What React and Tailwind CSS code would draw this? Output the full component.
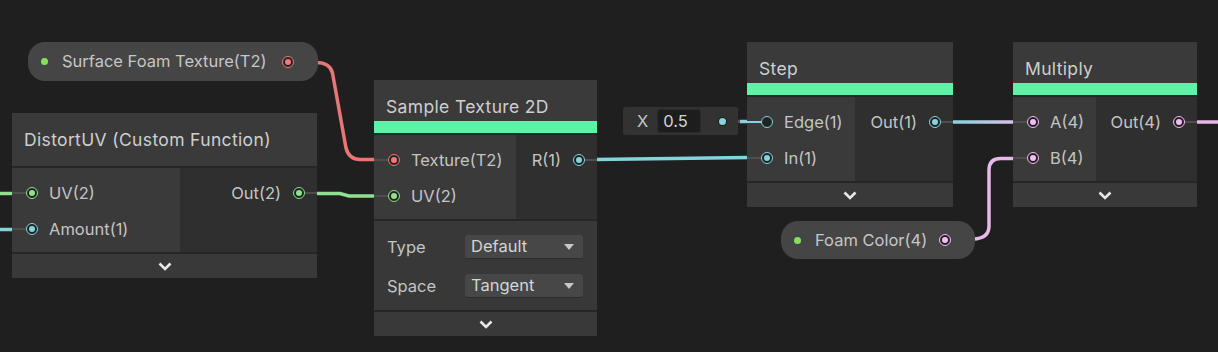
const PORT = {
  green: { ring: 'border-[#8fe08f]', dot: 'bg-[#8fe08f]' },
  cyan: { ring: 'border-[#84d4dc]', dot: 'bg-[#84d4dc]' },
  red: { ring: 'border-[#f07a7a]', dot: 'bg-[#f07a7a]' },
  pink: { ring: 'border-[#f2bdf2]', dot: 'bg-[#f2bdf2]' },
};

const Port = ({ color, empty }) => (
  <span className={`flex items-center justify-center w-[12px] h-[12px] rounded-full border-[1.5px] bg-[#222222] shrink-0 ${PORT[color].ring}`}>
    {!empty && <span className={`w-[6px] h-[6px] rounded-full ${PORT[color].dot}`} />}
  </span>
);

const InRow = ({ label, color, empty, stub = 'bg-[#4e4e4e]' }) => (
  <div className="flex items-center h-[36px]">
    <span className={`w-[14px] h-[2px] shrink-0 ${stub}`} />
    <Port color={color} empty={empty} />
    <span className="ml-[11px] text-[16.5px] text-[#c4c4c4] whitespace-nowrap">{label}</span>
  </div>
);

const OutRow = ({ label, color }) => (
  <div className="flex items-center justify-end h-[36px]">
    <span className="mr-[12px] text-[16.5px] text-[#c4c4c4] whitespace-nowrap">{label}</span>
    <Port color={color} />
    <span className="w-[12px] h-[2px] shrink-0 bg-[#4e4e4e]" />
  </div>
);

const Chevron = () => (
  <svg width="14" height="9" viewBox="0 0 14 9">
    <path d="M1.5 1.5 7 7l5.5-5.5" stroke="#e8e8e8" strokeWidth="2.6" fill="none" />
  </svg>
);

const Node = ({ pos, title, accent, headerH = 'h-[41px]', inW, inputs, outputs, children }) => (
  <div className={`absolute flex flex-col bg-[#262626] ${pos}`}>
    <div className={`${headerH} bg-[#3a3a3a] pl-[12px] pt-[16px] text-[17.5px] leading-[22px] tracking-[0.35px] text-[#cfcfcf] whitespace-nowrap`}>
      {title}
    </div>
    {accent && <div className="h-[12px] bg-[#5ef2a6]" />}
    <div className="flex mt-[2px] h-[84px]">
      <div className={`${inW} bg-[#3a3a3a] pt-[7px]`}>{inputs}</div>
      <div className="flex-1 bg-[#2f2f2f] pt-[7px]">{outputs}</div>
    </div>
    {children}
    <div className="mt-[2px] h-[24px] bg-[#393939] flex items-center justify-center">
      <Chevron />
    </div>
  </div>
);

const Dropdown = ({ label, value }) => (
  <div className="flex items-center h-[24px]">
    <span className="w-[78px] text-[16.5px] text-[#c4c4c4]">{label}</span>
    <div className="flex items-center w-[118px] h-[24px] pl-[6px] pr-[9px] rounded-[3px] bg-[#474747] border-b border-[#2c2c2c] text-[16.5px] text-[#d4d4d4]">
      {value}
      <svg className="ml-auto" width="10" height="6" viewBox="0 0 10 6">
        <path d="M0 0h10L5 6z" fill="#c8c8c8" />
      </svg>
    </div>
  </div>
);

const Pill = ({ pos, label, color }) => (
  <div className={`absolute flex items-center pl-[13px] pr-[24px] rounded-[17px] bg-[#454545] ${pos}`}>
    <span className="w-[7px] h-[7px] rounded-full bg-[#86e05a] shrink-0" />
    <span className="ml-[14px] text-[16.5px] text-[#c6c6c6] whitespace-nowrap">{label}</span>
    <span className="ml-auto">
      <Port color={color} />
    </span>
  </div>
);

export default function App() {
  return (
    <div className="relative w-[1218px] h-[352px] overflow-hidden bg-[#1f1f1f] font-[Inter,sans-serif]">
      {/* wires */}
      <svg className="absolute inset-0" width="1218" height="352">
        <defs>
          <linearGradient id="stepMul" x1="953" y1="0" x2="1013" y2="0" gradientUnits="userSpaceOnUse">
            <stop offset="0" stopColor="#84d4dc" />
            <stop offset="1" stopColor="#d8bfe6" />
          </linearGradient>
        </defs>
        <g fill="none" strokeWidth="3.5">
          <path d="M0 193.5H14" stroke="#8fe08f" />
          <path d="M0 229.5H14" stroke="#84d4dc" />
          <path d="M316 62.5Q330 62.5 332.5 73L346 148Q349 159.5 360 159.5H376" stroke="#e87676" />
          <path d="M316 193.5H340L349 196H376" stroke="#8fe08f" />
          <path d="M595 159.5L749 157.5" stroke="#84d4dc" />
          <path d="M726 121.5H740" stroke="#4e4e4e" />
          <path d="M740 121.5H749" stroke="#84d4dc" />
          <path d="M951 122H1015" stroke="url(#stepMul)" />
          <path d="M973 239Q989 238.5 989 226V170Q989 158.5 1001 158.5H1015" stroke="#e8b8e8" />
          <path d="M1195 122H1218" stroke="#e8b8e8" />
        </g>
      </svg>

      <Pill pos="left-[28px] top-[42px] w-[290px] h-[39px]" label="Surface Foam Texture(T2)" color="red" />

      <Node
        pos="left-[12px] top-[113px] w-[305px]"
        title="DistortUV (Custom Function)"
        headerH="h-[53px]"
        inW="w-[168px]"
        inputs={
          <>
            <InRow label="UV(2)" color="green" />
            <InRow label="Amount(1)" color="cyan" />
          </>
        }
        outputs={<OutRow label="Out(2)" color="green" />}
      />

      <Node
        pos="left-[374px] top-[80px] w-[223px]"
        title="Sample Texture 2D"
        accent
        inW="w-[142px]"
        inputs={
          <>
            <InRow label="Texture(T2)" color="red" />
            <InRow label="UV(2)" color="green" />
          </>
        }
        outputs={<OutRow label="R(1)" color="cyan" />}
      >
        <div className="mt-[2px] h-[89px] bg-[#383838] pl-[13px] pt-[14px] flex flex-col gap-[15px]">
          <Dropdown label="Type" value="Default" />
          <Dropdown label="Space" value="Tangent" />
        </div>
      </Node>

      <div className="absolute left-[623px] top-[107px] w-[115px] h-[28px] bg-[#323232] rounded-[2px] flex items-center pl-[14px]">
        <span className="text-[16.5px] text-[#c4c4c4]">X</span>
        <span className="ml-[9px] w-[44px] h-[24px] flex items-center pl-[5px] bg-[#1d1d1d] border border-[#2b2b2b] rounded-[3px] text-[16.5px] text-[#d4d4d4]">
          0.5
        </span>
        <span className="ml-auto mr-[12px] w-[7px] h-[7px] rounded-full bg-[#84d4dc] ring-1 ring-[#1e1e1e]" />
      </div>

      <Node
        pos="left-[747px] top-[42px] w-[206px]"
        title="Step"
        accent
        inW="w-[108px]"
        inputs={
          <>
            <InRow label="Edge(1)" color="cyan" empty stub="bg-[#84d4dc]" />
            <InRow label="In(1)" color="cyan" />
          </>
        }
        outputs={<OutRow label="Out(1)" color="cyan" />}
      />

      <Pill pos="left-[781px] top-[221px] w-[194px] h-[38px]" label="Foam Color(4)" color="pink" />

      <Node
        pos="left-[1013px] top-[42px] w-[184px]"
        title="Multiply"
        accent
        inW="w-[83px]"
        inputs={
          <>
            <InRow label="A(4)" color="pink" />
            <InRow label="B(4)" color="pink" />
          </>
        }
        outputs={<OutRow label="Out(4)" color="pink" />}
      />
    </div>
  );
}
